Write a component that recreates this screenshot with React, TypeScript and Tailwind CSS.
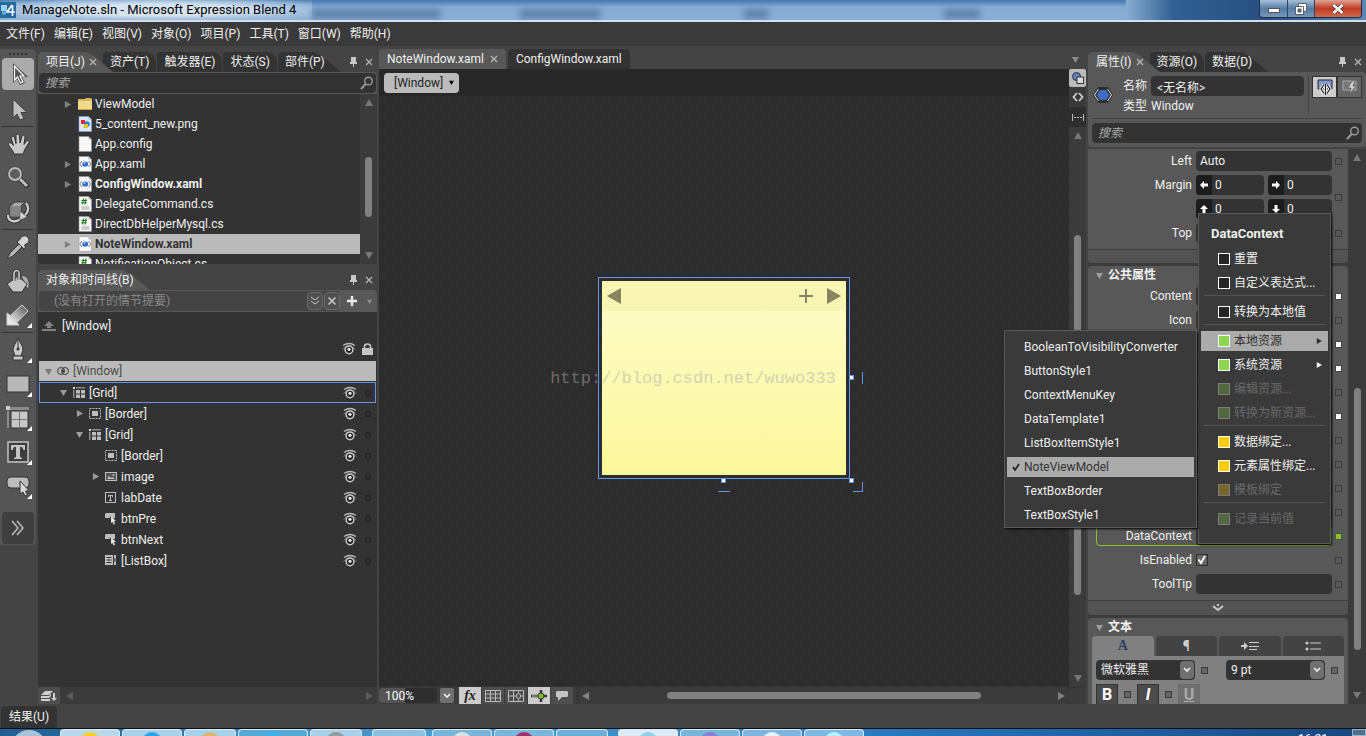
import type { ReactNode } from "react";
import clsx from "clsx";

interface FileItem {
  name: string;
  icon: "folder" | "image" | "blank" | "xaml" | "cs";
  expandable?: boolean;
  bold?: boolean;
  selected?: boolean;
}

interface TreeItem {
  name: string;
  icon: "grid" | "border" | "image" | "text" | "button" | "list";
  indent: string;
  arrow?: "open" | "closed";
  outlined?: boolean;
}

interface MenuEntry {
  label: string;
  swatch: string;
  disabled?: boolean;
  active?: boolean;
  submenu?: boolean;
}

const menus = ["文件(F)", "编辑(E)", "视图(V)", "对象(O)", "项目(P)", "工具(T)", "窗口(W)", "帮助(H)"];

const files: FileItem[] = [
  { name: "ViewModel", icon: "folder", expandable: true },
  { name: "5_content_new.png", icon: "image" },
  { name: "App.config", icon: "blank" },
  { name: "App.xaml", icon: "xaml", expandable: true },
  { name: "ConfigWindow.xaml", icon: "xaml", expandable: true, bold: true },
  { name: "DelegateCommand.cs", icon: "cs" },
  { name: "DirectDbHelperMysql.cs", icon: "cs" },
  { name: "NoteWindow.xaml", icon: "xaml", expandable: true, bold: true, selected: true },
  { name: "NotificationObject.cs", icon: "cs" },
];

const treeItems: TreeItem[] = [
  { name: "[Grid]", icon: "grid", indent: "pl-5", arrow: "open", outlined: true },
  { name: "[Border]", icon: "border", indent: "pl-9", arrow: "closed" },
  { name: "[Grid]", icon: "grid", indent: "pl-9", arrow: "open" },
  { name: "[Border]", icon: "border", indent: "pl-[52px]" },
  { name: "image", icon: "image", indent: "pl-[52px]", arrow: "closed" },
  { name: "labDate", icon: "text", indent: "pl-[52px]" },
  { name: "btnPre", icon: "button", indent: "pl-[52px]" },
  { name: "btnNext", icon: "button", indent: "pl-[52px]" },
  { name: "[ListBox]", icon: "list", indent: "pl-[52px]" },
];

const resources = [
  "BooleanToVisibilityConverter", "ButtonStyle1", "ContextMenuKey", "DataTemplate1",
  "ListBoxItemStyle1", "NoteViewModel", "TextBoxBorder", "TextBoxStyle1",
];

const menuGroups: MenuEntry[][] = [
  [
    { label: "重置", swatch: "border-white bg-[#262626]" },
    { label: "自定义表达式...", swatch: "border-white bg-[#262626]" },
  ],
  [{ label: "转换为本地值", swatch: "border-white bg-[#262626]" }],
  [
    { label: "本地资源", swatch: "border-white bg-[#8fd650]", active: true, submenu: true },
    { label: "系统资源", swatch: "border-white bg-[#8fd650]", submenu: true },
    { label: "编辑资源...", swatch: "border-[#7c7c7c] bg-[#52683f]", disabled: true },
    { label: "转换为新资源...", swatch: "border-[#7c7c7c] bg-[#52683f]", disabled: true },
  ],
  [
    { label: "数据绑定...", swatch: "border-white bg-[#ffcc00]" },
    { label: "元素属性绑定...", swatch: "border-white bg-[#ffcc00]" },
    { label: "模板绑定", swatch: "border-[#7c7c7c] bg-[#75662a]", disabled: true },
  ],
  [{ label: "记录当前值", swatch: "border-[#7c7c7c] bg-[#52683f]", disabled: true }],
];

// rows that sit under the open menus
const coveredRows = ["white", "white", "plain", "white", "plain", "plain", "plain", "plain"] as const;

/* ---------- small shared pieces ---------- */

function Arrow({ dir, className }: { dir: "up" | "down" | "left" | "right"; className?: string }) {
  const d = { up: "M0 7h8L4 0z", down: "M0 1h8L4 8z", left: "M7 0v8L0 4z", right: "M1 0v8l7-4z" }[dir];
  return (
    <svg viewBox="0 0 8 8" className={clsx("shrink-0", className ?? "size-2")} fill="currentColor">
      <path d={d} />
    </svg>
  );
}

function Close() {
  return (
    <button aria-label="Close" className="text-[#b5b5b5]">
      <svg viewBox="0 0 8 8" className="size-2" stroke="currentColor" strokeWidth="1.3">
        <path d="M1 1l6 6M7 1L1 7" />
      </svg>
    </button>
  );
}

function Pin() {
  return (
    <button aria-label="Pin" className="text-[#c8c8c8]">
      <svg viewBox="0 0 9 10" className="h-2.5 w-[9px]" fill="currentColor">
        <path d="M2 0h5v5H2zM1 5h7v2H1zM4 7h1v3H4z" />
      </svg>
    </button>
  );
}

function Search() {
  return (
    <svg viewBox="0 0 14 14" className="size-3.5 shrink-0 text-[#9a9a9a]" fill="none" stroke="currentColor">
      <circle cx="8.500" cy="5" r="3.800" strokeWidth="1.400" />
      <path d="M5.700 8L1 13" strokeWidth="2" />
    </svg>
  );
}

function Eye() {
  return (
    <svg viewBox="0 0 14 13" className="h-[13px] w-3.5 shrink-0" fill="none">
      <path d="M1 3.500Q7-.5 13 3.500" stroke="#b9b9b9" strokeWidth="1.300" />
      <path d="M.5 7.500Q3 4 7 4t6.500 3.500" stroke="#777" />
      <circle cx="7" cy="7.800" r="3.900" fill="#222" stroke="#c9c9c9" strokeWidth="1.500" />
      <circle cx="7" cy="7.300" r="1.600" fill="#e8e8e8" />
    </svg>
  );
}

function Marker({ kind = "plain" }: { kind?: "plain" | "white" | "green" }) {
  return (
    <button
      aria-label="Advanced options"
      className={clsx("size-[7px] shrink-0 border", {
        "border-[#3b3b3b]": kind === "plain",
        "border-[#444] bg-white": kind === "white",
        "border-[#4c5c30] bg-[#8dbf2d]": kind === "green",
      })}
    />
  );
}

function Tabs({ tabs }: { tabs: string[] }) {
  return (
    <div className="flex h-[26px] items-end pt-1.5">
      {tabs.map((tab, i) => (
        <div
          key={tab}
          className={clsx("flex h-5 items-center gap-1 whitespace-nowrap", {
            "relative z-10 -mr-2.5 bg-[#585858] pr-4 pl-2 [clip-path:polygon(0_3px,3px_0,calc(100%-27px)_0,calc(100%-19px)_4px,100%_100%,0_100%)]": i === 0,
            "mr-px rounded-t-[10px] rounded-tl-[3px] bg-[#333] pr-[7px] pl-[7px]": i > 0 && i < tabs.length - 1,
            "bg-[#333] pr-4 pl-[7px] [clip-path:polygon(0_3px,3px_0,calc(100%-27px)_0,calc(100%-19px)_4px,100%_100%,0_100%)]": i > 0 && i === tabs.length - 1,
          })}
        >
          <button>{tab}</button>
          {i === 0 && tabs.length > 1 && <Close />}
        </div>
      ))}
      <div className="ml-auto flex h-5 shrink-0 items-center gap-[7px] pr-1">
        <Pin />
        <Close />
      </div>
    </div>
  );
}

function VScroll({ before, thumb, className }: { before: string; thumb: string; className?: string }) {
  return (
    <div className={clsx("flex shrink-0 flex-col items-center bg-[#3b3b3b] text-[#777]", className)}>
      <Arrow dir="up" className="mt-[5px] size-2" />
      <div className={before} />
      <div className={clsx("w-[7px] rounded-full bg-[#808080]", thumb)} />
      <Arrow dir="down" className="mt-auto mb-[5px] size-2" />
    </div>
  );
}

/* ---------- icons ---------- */

function FileIcon({ kind }: { kind: FileItem["icon"] }) {
  if (kind === "folder") {
    return (
      <svg viewBox="0 0 14 14" className="size-3.5">
        <path d="M0 2h7l1-1h5l1 1v11H0z" fill="#d9b55c" />
        <path d="M0 4h14v9H0z" fill="#f3d98e" />
        <path d="M0 12h14v1H0z" fill="#c9a146" />
      </svg>
    );
  }
  return (
    <svg viewBox="0 0 14 16" className="h-4 w-3.5">
      <path d="M1 .5h9.500l3 3v12H1z" fill={kind === "image" ? "#dce9fa" : "#f7f7f7"} stroke={kind === "image" ? "#7d9fd4" : "#999"} strokeWidth=".6" />
      <path d="M10.500.5v3h3z" fill="#bbb" />
      {kind === "image" && (
        <>
          <path d="M3 4h4v4H3z" fill="#e8261c" />
          <circle cx="9" cy="8" r="2.800" fill="#2a7de0" />
          <path d="M7 8h3v4H5z" fill="#f5c518" />
        </>
      )}
      {kind === "xaml" && (
        <>
          <path d="M4 5L1.800 8 4 11M10.500 5l2.200 3-2.200 3" fill="none" stroke="#777" strokeWidth=".9" />
          <ellipse cx="7.200" cy="8" rx="3" ry="2.600" fill="#2b6fd6" />
          <circle cx="6.500" cy="7" r="1" fill="#a9d0ff" />
        </>
      )}
      {kind === "cs" && (
        <>
          <path d="M5.500 2.500l-1 6M8 2.500l-1 6M3.500 4.500H9M3.200 6.700h5.500" stroke="#1a7a1a" strokeWidth="1.100" />
          <path d="M3.500 11h8M3.500 13h8" stroke="#999" strokeWidth=".9" />
        </>
      )}
    </svg>
  );
}

function TreeIcon({ kind }: { kind: TreeItem["icon"] }) {
  return (
    <svg viewBox="0 0 12 12" className="size-3 shrink-0" fill="#bdbdbd">
      {kind === "grid" && (
        <>
          <path d="M0 0h2v2H0z" fill="#ddd" />
          <path d="M3 0h9v1.500H3zM0 3h1.500v8H0z" fill="#8a8a8a" />
          <path d="M3 3h4v3.500H3zM8 3h4v3.500H8zM3 7.500h4V11H3zM8 7.500h4V11H8z" />
        </>
      )}
      {kind === "border" && (
        <>
          <rect x="3" y="3" width="6" height="5" />
          <rect x=".5" y=".5" width="11" height="10" fill="none" stroke="#bdbdbd" strokeDasharray="2 1" />
        </>
      )}
      {kind === "image" && (
        <>
          <rect x=".5" y="1.500" width="11" height="8" fill="#555" stroke="#bdbdbd" />
          <path d="M2 8l2-3 2 2 1-1 3 2z" />
          <circle cx="8.500" cy="4" r="1" />
        </>
      )}
      {kind === "text" && (
        <>
          <rect x=".5" y=".5" width="10" height="10" fill="none" stroke="#bdbdbd" />
          <path d="M3 3h5v2H7V4H6v4h1v1H4V8h1V4H4v1H3z" />
        </>
      )}
      {kind === "button" && (
        <>
          <path d="M1 0h9v5H7L5 3v2H0V1z" />
          <path d="M6 3l5 5H9l1 3-1.500.500L7.500 9 6 10z" fill="#e0e0e0" />
        </>
      )}
      {kind === "list" && (
        <>
          <path d="M0 0h8v10H0zM9 0h2v3H9zM9 7h2v3H9zM9.500 3h1v4h-1z" />
          <path d="M1.500 2.500h5M1.500 5h5M1.500 7.500h5" stroke="#333" />
        </>
      )}
    </svg>
  );
}

const toolGroups: { name: string; more?: boolean; icon: ReactNode }[][] = [
  [
    {
      name: "Selection",
      icon: (
        <>
          <path d="M7 1v20l4-4 3 6 5-2-3-6h6z" fill="#444" />
          <path d="M8.500 4v14l3-3 3 6 2.500-1-3-6h4z" fill="#555" stroke="#fff" strokeWidth="1.200" />
        </>
      ),
    },
    { name: "Direct Selection", icon: <path d="M7 2v19l4-4 3 6 4-1.500-3-6h6z" fill="#c0c0c0" stroke="#3c3c3c" /> },
  ],
  [
    {
      name: "Pan",
      icon: <path d="M8 22c-1-4-4-6-6-10 1-2 3.500-1.500 5.500 1.500L5 6c.5-2 2.500-2 3.500-.5l1.500 6V3.500c1-2 3-1.500 3.500.5l.5 7L16 4c1.200-1.500 3-.5 3 1.500l-1 7 2.500-3.500c1.500-1 3 0 2.500 1.500L19 17l-2 5z" fill="#c8c8c8" stroke="#333" />,
    },
    {
      name: "Zoom",
      icon: (
        <>
          <path d="M14 13l8 8" stroke="#333" strokeWidth="5" />
          <path d="M14 13l7 7" stroke="#c0c0c0" strokeWidth="3" />
          <circle cx="9" cy="8" r="7" stroke="#333" />
          <circle cx="9" cy="8" r="6" fill="#5d5d5d" stroke="#bdbdbd" strokeWidth="1.800" />
        </>
      ),
    },
    {
      name: "Camera Orbit",
      icon: (
        <>
          <path d="M4 6l5-4h10l-4 4v11H4z" fill="#a8a8a8" stroke="#383838" />
          <path d="M4 6h11v10H4z" fill="#858585" />
          <path d="M20 3c4 5 2 11-4 14M2 15c0 7 8 8 12 4" stroke="#333" strokeWidth="4" />
          <path d="M20 3c4 5 2 11-4 14M2 15c0 7 8 8 12 4" stroke="#d2d2d2" strokeWidth="2.200" />
          <path d="M14 11v9l7-3z" fill="#d2d2d2" stroke="#444" strokeWidth=".5" />
        </>
      ),
    },
  ],
  [
    {
      name: "Color Eyedropper",
      icon: (
        <>
          <path d="M1 24l3-6 9-9 3 3-9 9z" fill="#b5b5b5" stroke="#333" />
          <path d="M11 7l7 7 1.500-2-1-2c4-2 6-5 3-8s-7 0-8 3l-1.500 1z" fill="#d4d4d4" stroke="#333" />
        </>
      ),
    },
    {
      name: "Paint Bucket",
      icon: (
        <>
          <path d="M15 7c6-2 9 4 8 12-3 1-4-3-5-6z" fill="#aaa" stroke="#333" strokeWidth=".8" />
          <path d="M1 15L12 7l9 8-5 8H7z" fill="#c4c4c4" stroke="#333" />
          <path d="M8 12V5c0-5 6-4 5 0v6" stroke="#333" strokeWidth="3" />
          <path d="M8 12V5c0-5 6-4 5 0v6" stroke="#d6d6d6" strokeWidth="1.500" />
        </>
      ),
    },
    {
      name: "Gradient",
      more: true,
      icon: (
        <>
          <defs>
            <linearGradient id="brush" x1="0" y1="1" x2="1" y2="0">
              <stop offset="0.200" stopColor="#e8e8e8" />
              <stop offset="1" stopColor="#4d4d4d" />
            </linearGradient>
          </defs>
          <path d="M1 22V10l3.500 2.500L16 2l6 6-11 11.500 2 2.500z" fill="url(#brush)" stroke="#d0d0d0" />
        </>
      ),
    },
  ],
  [
    {
      name: "Pen",
      more: true,
      icon: (
        <>
          <path d="M12 0c2 5 5 8 5 12l-2 6H9l-2-6c0-4 3-7 5-12z" fill="#c8c8c8" stroke="#333" />
          <path d="M12 2v9" stroke="#333" />
          <circle cx="12" cy="11" r="1.500" fill="#333" />
          <path d="M7 18h10v4H7z" fill="#c8c8c8" stroke="#333" />
        </>
      ),
    },
    { name: "Rectangle", more: true, icon: <rect x="1" y="4" width="22" height="16" fill="#b8b8b8" stroke="#333" /> },
    {
      name: "Grid",
      more: true,
      icon: (
        <>
          <path d="M4 1h19v3H4zM1 5h2v17H1z" fill="#8b8b8b" />
          <rect x="0" y="0" width="4" height="4" fill="#ccc" />
          <path d="M5 5h17v17H5z" fill="#c8c8c8" stroke="#333" />
          <path d="M13.500 6v15M6 13.500h15" stroke="#777" />
        </>
      ),
    },
    {
      name: "TextBlock",
      more: true,
      icon: (
        <>
          <rect x="2" y="2" width="20" height="20" fill="#3d3d3d" stroke="#c4c4c4" strokeWidth="1.500" />
          <path d="M5 5h14v5h-1.500L16 7h-2v10l2 1v1H8v-1l2-1V7H8l-1.500 3H5z" fill="#c4c4c4" />
        </>
      ),
    },
    {
      name: "Button",
      more: true,
      icon: (
        <>
          <rect x="1" y="3" width="22" height="11" rx="4" fill="#bdbdbd" stroke="#333" />
          <path d="M14 7v13l3-2 2 4 2.500-1-2-4h4z" fill="#d8d8d8" stroke="#333" />
        </>
      ),
    },
  ],
];

/* ---------- title bar, menu ---------- */

function TitleBar() {
  return (
    <header className="flex h-[22px] shrink-0 items-center overflow-hidden border-b-2 border-[#cfdff0] bg-[linear-gradient(180deg,#4377ae,#85abd3_35%,#8aaed3)]">
      <div className="flex h-5 items-center gap-1.5 bg-[radial-gradient(ellipse_at_center,#d6e4f1_40%,#a5c2de_65%,transparent)] pr-4 text-black">
        <svg viewBox="0 0 16 16" className="size-4">
          <rect width="16" height="16" fill="#246b9c" />
          <path d="M1 3h6v6H1z" fill="#9bd1ef" />
          <path d="M12 3L7 10h8M12.500 3v11" fill="none" stroke="#fff" strokeWidth="1.600" />
          <circle cx="4" cy="11" r="2" fill="#62b3df" />
        </svg>
        <h1 className="text-[13px] whitespace-nowrap">ManageNote.sln - Microsoft Expression Blend 4</h1>
      </div>
      {/* windows showing through the glass */}
      <div className="flex flex-1 items-center overflow-hidden pt-2 opacity-60 blur-[3px]">
        <div className="h-2.5 w-32 bg-[#46678c]" />
        <div className="ml-20 h-2.5 w-20 bg-[#46678c]" />
        <div className="ml-36 h-2.5 w-6 bg-[#46678c]" />
        <div className="ml-44 h-2.5 w-9 bg-[#46678c]" />
      </div>
      <div className="flex h-5 w-60 items-start justify-end bg-[linear-gradient(90deg,#8aaed3,#315f92_20%,#274f7f_60%,#5e86b0)] pr-1">
        <div className="flex h-[18px] overflow-hidden rounded-b border border-t-0 border-[#1d2f45]">
          <button aria-label="Minimize" className="flex w-7 items-center justify-center border-r border-[#2c4664] bg-[linear-gradient(#a9bfd6,#567ca5_50%,#7497bb)]">
            <svg viewBox="0 0 12 5" className="mt-1 h-[5px] w-3"><rect x=".5" y=".5" width="11" height="4" fill="#fff" stroke="#555" /></svg>
          </button>
          <button aria-label="Restore" className="flex w-[27px] items-center justify-center border-r border-[#2c4664] bg-[linear-gradient(#a9bfd6,#567ca5_50%,#7497bb)]">
            <svg viewBox="0 0 12 12" className="size-3" fill="#fff" stroke="#444" strokeWidth=".8">
              <path d="M3.500.500h8v8h-8z" />
              <path d="M.5 3.500h8v8h-8z" />
              <path d="M3 6h3v3H3z" fill="#567ca5" />
            </svg>
          </button>
          <button aria-label="Close window" className="flex w-[46px] items-center justify-center bg-[linear-gradient(#e0a397,#bf3a22_50%,#d06a4c)]">
            <svg viewBox="0 0 12 10" className="h-2.5 w-3">
              <path d="M1.500 1l9 8M10.500 1l-9 8" stroke="#444" strokeWidth="4" />
              <path d="M1.500 1l9 8M10.500 1l-9 8" stroke="#fff" strokeWidth="2.500" />
            </svg>
          </button>
        </div>
      </div>
    </header>
  );
}

function Toolbox() {
  return (
    <aside className="w-[38px] shrink-0 pt-[3px]">
      <div className="w-9 rounded-r bg-[#555] px-0.5 pb-px">
        <div className="flex h-[9px] items-center justify-center">
          <div className="w-[18px] border-t-2 border-dotted border-[#333]" />
        </div>
        {toolGroups.map((group, g) => (
          <div key={g} className={clsx(g > 0 && "border-t border-[#333]")}>
            {group.map((tool, t) => (
              <button
                key={tool.name}
                aria-label={tool.name}
                className={clsx(
                  "relative flex w-8 items-center justify-center rounded-sm",
                  g === 0 && t === 0 ? "mb-0.5 h-8 bg-[#ababab]" : "h-[34px]"
                )}
              >
                <svg viewBox="0 0 24 24" className="size-6" fill="none">{tool.icon}</svg>
                {tool.more && (
                  <svg viewBox="0 0 5 5" className="absolute right-0.5 bottom-1 size-[5px]"><path d="M5 0v5H0z" fill="#fff" /></svg>
                )}
              </button>
            ))}
          </div>
        ))}
        <button aria-label="More tools" className="mt-[9px] flex h-8 w-8 items-center justify-center rounded-sm bg-[#3f3f3f]">
          <svg viewBox="0 0 16 16" className="size-4" fill="none" stroke="#bdbdbd" strokeWidth="1.500">
            <path d="M2 1l6 7-6 7M7 1l6 7-6 7" />
          </svg>
        </button>
      </div>
    </aside>
  );
}

/* ---------- left panels ---------- */

function ProjectPanel() {
  return (
    <section>
      <Tabs tabs={["项目(J)", "资产(T)", "触发器(E)", "状态(S)", "部件(P)"]} />
      <div className="rounded-tr bg-[#585858] p-px">
        <label className="flex h-5 items-center rounded-sm bg-[#333] pr-0.5 pl-1.5">
          <input aria-label="搜索" placeholder="搜索" className="min-w-0 flex-1 bg-transparent italic placeholder:text-[#a8a8a8]" />
          <Search />
        </label>
      </div>
      <div className="flex h-[170px] overflow-hidden rounded-b bg-[#333]">
        <ul className="min-w-0 flex-1">
          {files.map((file) => (
            <li
              key={file.name}
              className={clsx("flex h-5 items-center pl-[26px]", {
                "bg-[#bbb] text-[#333]": file.selected,
                "font-bold": file.bold,
              })}
            >
              <span className="w-3.5 text-[#808080]">
                {file.expandable && <Arrow dir="right" className="size-[7px]" />}
              </span>
              <FileIcon kind={file.icon} />
              <span className="ml-[3px] whitespace-nowrap">{file.name}</span>
            </li>
          ))}
        </ul>
        <VScroll before="h-[50px]" thumb="h-[60px]" className="w-[17px]" />
      </div>
    </section>
  );
}

function ObjectsPanel() {
  return (
    <section className="flex min-h-0 flex-1 flex-col">
      <Tabs tabs={["对象和时间线(B)"]} />
      <div className="flex h-[22px] items-center rounded-tr bg-[#585858] p-px">
        <div className="flex h-5 flex-1 items-center gap-px rounded bg-[#444] pl-[15px] text-[#8a8a8a]">
          <span className="flex-1">(没有打开的情节提要)</span>
          <button aria-label="Open storyboard" className="flex h-[18px] w-4 items-center justify-center rounded-sm border border-[#6b6b6b] bg-[#505050]">
            <svg viewBox="0 0 10 10" className="size-2.5" fill="none" stroke="#ccc"><path d="M1 1l4 3 4-3M1 5l4 3 4-3" /></svg>
          </button>
          <button aria-label="Close storyboard" className="flex h-[18px] w-4 items-center justify-center rounded-sm border border-[#6b6b6b] bg-[#505050]">
            <svg viewBox="0 0 10 10" className="size-2.5" stroke="#ccc" strokeWidth="1.500"><path d="M1.500 1.500l7 7M8.500 1.500l-7 7" /></svg>
          </button>
        </div>
        <button aria-label="New storyboard" className="flex w-9 items-center justify-end gap-2.5 pr-1 text-[#8f8f8f]">
          <svg viewBox="0 0 10 10" className="size-2.5" stroke="#e6e6e6" strokeWidth="2.500"><path d="M5 0v10M0 5h10" /></svg>
          <Arrow dir="down" className="size-[5px]" />
        </button>
      </div>
      <div className="min-h-0 flex-1 overflow-hidden bg-[#333]">
        <div className="flex h-7 items-center gap-1.5 pl-1">
          <svg viewBox="0 0 14 10" className="h-2.5 w-3.5" fill="#848484"><path d="M7 0l5 5H9v2H5V5H2zM0 8h14v2H0z" /></svg>
          <span>[Window]</span>
        </div>
        <div className="flex h-[21px] items-center justify-end gap-1.5 pr-1 pb-1">
          <Eye />
          <svg viewBox="0 0 11 12" className="h-3 w-[11px]" fill="#c4c4c4"><path d="M0 5h11v7H0z" /><path d="M2.500 6V3.500q0-2.500 3-2.500t3 2.500V6" fill="none" stroke="#c4c4c4" strokeWidth="1.600" /></svg>
        </div>
        <div className="mx-px mb-px flex h-5 items-center bg-[#bbb] pl-1.5 text-[#4b4b4b]">
          <Arrow dir="down" className="mr-[5px] size-[7px] text-[#777]" />
          <svg viewBox="0 0 12 8" className="mr-1 h-2 w-3" fill="none" stroke="#3f3f3f"><rect x=".5" y=".5" width="7" height="7" rx="3.500" /><rect x="4.500" y=".5" width="7" height="7" rx="3.500" /><circle cx="6" cy="4" r="1" fill="#3f3f3f" /></svg>
          <span>[Window]</span>
        </div>
        <ul>
          {treeItems.map((item, i) => (
            <li key={i} className={clsx("mx-px flex h-[21px] items-center border pr-1", item.indent, item.outlined ? "border-[#6495ed]" : "border-transparent")}>
              <span className="w-[13px] text-[#9c9c9c]">
                {item.arrow && <Arrow dir={item.arrow === "open" ? "down" : "right"} className="size-[7px]" />}
              </span>
              <TreeIcon kind={item.icon} />
              <span className="ml-1 flex-1">{item.name}</span>
              <Eye />
              <span className="ml-2 size-1.5 rounded-sm border border-[#1c1c1c]" />
            </li>
          ))}
        </ul>
      </div>
      <div className="flex h-[17px] shrink-0 items-center bg-[#3b3b3b] pr-1 text-[#5e5e5e]">
        <button aria-label="Arrange by Z order" className="mr-1.5 flex h-full w-[22px] items-center justify-center bg-[#4e4e4e]">
          <svg viewBox="0 0 16 12" className="h-3 w-4" fill="#d0d0d0"><path d="M4 1h8L8 5H0zM0 6h8l2-2v2L8 8H0zM0 9h9v2H0zM12 3h2v5h2l-3 3-3-3h2z" /></svg>
        </button>
        <Arrow dir="left" />
        <Arrow dir="right" className="ml-auto size-2" />
      </div>
    </section>
  );
}

/* ---------- artboard ---------- */

const stripButton = "flex h-[17px] w-[22px] items-center justify-center";

function Artboard() {
  return (
    <main className="flex min-w-0 flex-1 flex-col pl-0.5">
      <div className="flex h-[23px] items-end gap-0.5 pt-[3px]">
        <div className="flex h-5 items-center gap-1.5 rounded-t bg-[#585858] px-2">
          <button>NoteWindow.xaml</button>
          <Close />
        </div>
        <button className="h-5 rounded-t bg-[#333] px-2">ConfigWindow.xaml</button>
        <div className="ml-auto flex h-5 w-[22px] items-center text-[#8a8a8a]">
          <Arrow dir="down" className="mx-1.5 size-[7px]" />
        </div>
      </div>
      <div className="flex min-h-0 flex-1">
        <div className="flex min-w-0 flex-1 flex-col">
          <div className="flex h-[27px] items-center bg-[#282828] pl-[5px]">
            <button className="flex h-5 items-center gap-1.5 rounded-sm bg-[#bbb] pr-[5px] pl-2.5 text-[#222]">
              [Window]
              <Arrow dir="down" className="size-[5px] text-black" />
            </button>
          </div>
          <div className="relative flex min-h-0 flex-1 items-center justify-center bg-[repeating-conic-gradient(#2c2c2c_0_25%,#2e2e2e_0_50%)] bg-[length:16px_16px] pb-[26px]">
            <div className="relative h-[202px] w-[252px] border border-[#6495ed] p-[3px]">
              <div className="flex h-full flex-col bg-[linear-gradient(#fefccb,#fbf79b)]">
                <div className="flex h-[30px] items-center bg-[#f8f5b2] px-[5px] text-[#87845f]">
                  <button aria-label="Previous note"><Arrow dir="left" className="size-4" /></button>
                  <button aria-label="Add note" className="mr-3 ml-auto">
                    <svg viewBox="0 0 14 14" className="size-3.5" stroke="currentColor" strokeWidth="2"><path d="M7 0v14M0 7h14" /></svg>
                  </button>
                  <button aria-label="Next note"><Arrow dir="right" className="size-4" /></button>
                </div>
              </div>
              {/* resize handles */}
              <div className="absolute top-[97px] -right-[5px] size-[5px] border border-[#6495ed] bg-white" />
              <div className="absolute top-[94px] -right-3.5 h-3 w-px bg-[#6495ed]" />
              <div className="absolute -bottom-[5px] left-[122px] size-[5px] border border-[#6495ed] bg-white" />
              <div className="absolute -bottom-3.5 left-[119px] h-px w-3 bg-[#6495ed]" />
              <div className="absolute -right-[5px] -bottom-[5px] size-[5px] border border-[#6495ed] bg-white" />
              <div className="absolute -right-3.5 -bottom-3.5 size-2.5 border-r border-b border-[#6495ed]" />
            </div>
            <div className="absolute inset-0 flex items-center justify-center pr-[62px] pb-6 font-['Liberation_Mono',monospace] text-[17px] text-[#aaa]/50">
              http://blog.csdn.net/wuwo333
            </div>
          </div>
          <div className="flex h-[18px] shrink-0 items-center border-t border-[#333] bg-[#3b3b3b] text-[#808080]">
            <input aria-label="Zoom" defaultValue="100%" className="h-[15px] w-[58px] rounded bg-[linear-gradient(90deg,#555_26px,#2e2e2e_26px)] pl-1.5 text-white" />
            <button aria-label="Zoom levels" className="ml-[3px] flex h-[15px] w-3.5 items-center justify-center rounded-xs bg-[#707070]">
              <svg viewBox="0 0 8 6" className="h-1.5 w-2" fill="none" stroke="#eee" strokeWidth="1.600"><path d="M1 1l3 3 3-3" /></svg>
            </button>
            <div className="ml-[5px] flex gap-px">
              <button aria-label="Effects" className={clsx(stripButton, "bg-[#ccc] text-[#222]")}>
                <span className="font-['Liberation_Serif',serif] text-sm font-bold italic">fx</span>
              </button>
              <button aria-label="Show grid" className={clsx(stripButton, "bg-[#4e4e4e]")}>
                <svg viewBox="0 0 16 12" className="h-3 w-4" fill="none" stroke="#b9b9b9"><path d="M.5.500h15v11H.500zM5.500.500v11M10.500.500v11M.5 4h15M.5 8h15" /></svg>
              </button>
              <button aria-label="Snap to grid" className={clsx(stripButton, "bg-[#4e4e4e]")}>
                <svg viewBox="0 0 16 12" className="h-3 w-4" fill="none" stroke="#b9b9b9"><path d="M.5.500h15v11H.500zM5.500 1v10M1 6h7M13 6h3M10.500 1v2M10.500 9v2" /><circle cx="10.500" cy="6" r="2.200" /></svg>
              </button>
              <button aria-label="Snap to snaplines" className={clsx(stripButton, "bg-[#ccc]")}>
                <svg viewBox="0 0 16 14" className="h-3.5 w-4"><path d="M0 7h7M10 1v3M10 10v3M13 7h3" stroke="#333" strokeWidth="2.500" /><path d="M1 7h6" stroke="#bbb" /><circle cx="10" cy="7" r="3" fill="#7cc12c" stroke="#333" /></svg>
              </button>
              <button aria-label="Annotations" className={clsx(stripButton, "bg-[#4e4e4e]")}>
                <svg viewBox="0 0 12 10" className="h-2.5 w-3" fill="#c4c4c4"><path d="M1 0h10l1 1v4l-1 1H6l-4 4V6H0V1z" /></svg>
              </button>
            </div>
            <div className="ml-1 flex h-full flex-1 items-center border-l border-[#333] px-1">
              <Arrow dir="left" />
              <div className="ml-[16%] h-[7px] w-[65%] rounded-full bg-[#808080]" />
              <Arrow dir="right" className="ml-auto size-2" />
            </div>
          </div>
        </div>
        <div className="mr-0.5 flex w-[17px] shrink-0 flex-col bg-[#3b3b3b]">
          <button aria-label="Design" className="flex h-[18px] items-center justify-center rounded-xs bg-[#bbb]">
            <svg viewBox="0 0 12 12" className="size-3"><circle cx="4.500" cy="4.500" r="4" fill="#5e7fc0" stroke="#333" /><rect x="5" y="5" width="6.500" height="6.500" fill="#ddd" stroke="#333" /></svg>
          </button>
          <button aria-label="XAML" className="flex h-5 items-center justify-center bg-[#3a3a3a]">
            <svg viewBox="0 0 12 10" className="h-2.5 w-3" fill="none" stroke="#ccc" strokeWidth="1.800"><path d="M5 1L1.500 5 5 9M7 1l3.500 4L7 9" /></svg>
          </button>
          <button aria-label="Split" className="flex h-5 items-center justify-center bg-[#2e2e2e]">
            <svg viewBox="0 0 12 7" className="h-[7px] w-3" fill="none" stroke="#bbb"><path d="M.5 0v7M11.500 0v7" /><path d="M2 3.500h8" strokeDasharray="2 1" /></svg>
          </button>
          <VScroll before="h-[95px]" thumb="h-[360px]" className="min-h-0 flex-1" />
          <div className="h-[17px] border-t border-[#333]" />
        </div>
      </div>
    </main>
  );
}

/* ---------- properties ---------- */

function Row({ label, marker, children }: { label?: string; marker?: "plain" | "white" | "green"; children?: ReactNode }) {
  return (
    <div className="flex h-6 items-center">
      <span className="flex-1 pr-1 text-right">{label}</span>
      <div className="mr-[3px] flex w-[136px] gap-1">
        {children ?? <input aria-label={label ?? "Value"} className="h-5 w-full rounded bg-[#333] px-1" />}
      </div>
      <Marker kind={marker} />
      <span className="w-1.5" />
    </div>
  );
}

function MarginBox({ side, rotate }: { side: string; rotate: string }) {
  return (
    <label className="flex h-5 min-w-0 flex-1 items-center overflow-hidden rounded bg-[#333]">
      <span className="flex h-full w-4 shrink-0 items-center justify-center bg-[#1c1c1c]">
        <svg viewBox="0 0 8 8" className={clsx("size-2", rotate)} fill="#fff"><path d="M0 4l4-4v2.500h4v3H4V8z" /></svg>
      </span>
      <input aria-label={side} defaultValue="0" className="min-w-0 flex-1 bg-transparent pl-[3px]" />
    </label>
  );
}

function DropDown({ label, value }: { label: string; value: string }) {
  return (
    <div className="flex h-5 w-[99px] items-center rounded bg-[#333] pr-px">
      <select aria-label={label} className="h-5 min-w-0 flex-1 appearance-none bg-transparent pl-[5px]">
        <option>{value}</option>
      </select>
      <span className="flex h-[18px] w-3.5 items-center justify-center rounded-sm bg-[#707070]">
        <svg viewBox="0 0 8 6" className="h-1.5 w-2" fill="none" stroke="#eee" strokeWidth="1.600"><path d="M1 1l3 3 3-3" /></svg>
      </span>
    </div>
  );
}

function PropertiesPanel() {
  return (
    <aside className="flex w-[278px] shrink-0 flex-col">
      <Tabs tabs={["属性(I)", "资源(O)", "数据(D)"]} />
      <div className="rounded-b rounded-tr bg-[#585858] px-1 py-1">
        <div className="flex border-b border-[#444]">
          <svg viewBox="0 0 20 16" className="mt-[11px] mr-2.5 ml-px h-4 w-5 shrink-0">
            <path d="M5 0h10l5 8-5 8H5L0 8z" fill="#2d2d2d" />
            <path d="M5.500 2L1.500 8l4 6M14.500 2l4 6-4 6" fill="none" stroke="#ddd" />
            <path d="M7 3h6l3.500 5-3.500 5H7L3.500 8z" fill="#3f6bc0" />
          </svg>
          <div className="min-w-0 flex-1 pb-0.5">
            <label className="flex h-5 items-center gap-1">
              <span className="w-6 shrink-0">名称</span>
              <input defaultValue="<无名称>" className="h-5 min-w-0 flex-1 rounded bg-[#333] px-1.5" />
            </label>
            <p className="flex h-5 items-center gap-1"><span className="w-6 shrink-0">类型</span>Window</p>
          </div>
          <div className="mb-1 ml-1 flex border-l border-[#444] pl-[3px]">
            <button aria-label="Properties view" className="flex h-[22px] w-[25px] items-center justify-center border border-[#333] bg-[#ccc]">
              <svg viewBox="0 0 16 16" className="size-4"><path d="M1 1h14v9H1z" fill="#7f9ad0" stroke="#222" /><path d="M7 5.500L4 10l3 4.500M10 5.500l3 4.500-3 4.500M8.500 5v11" fill="none" stroke="#fff" strokeWidth="3" /><path d="M7 5.500L4 10l3 4.500M10 5.500l3 4.500-3 4.500M8.500 5v11" fill="none" stroke="#222" strokeWidth="1.300" /></svg>
            </button>
            <button aria-label="Events view" className="flex h-[22px] w-[25px] items-center justify-center border border-[#333] bg-[#666]">
              <svg viewBox="0 0 16 16" className="size-4"><path d="M1 2h13v9H1z" fill="#777" stroke="#aaa" /><path d="M10 2L6 9h3l-2 6 7-8h-3l2-5z" fill="#ccc" stroke="#444" strokeWidth=".5" /></svg>
            </button>
          </div>
        </div>
        <label className="mt-1 flex h-5 items-center rounded-sm bg-[#333] pr-0.5 pl-1.5">
          <input aria-label="搜索属性" placeholder="搜索" className="min-w-0 flex-1 bg-transparent italic placeholder:text-[#a8a8a8]" />
          <Search />
        </label>
      </div>
      <div className="mt-0.5 flex min-h-0 flex-1 overflow-hidden bg-[#3b3b3b]">
        <div className="w-[260px] shrink-0 overflow-hidden">
          <div className="rounded-b bg-[#585858]">
            <Row label="Left"><input aria-label="Left" defaultValue="Auto" className="h-5 w-full rounded bg-[#333] px-1" /></Row>
            <div className="flex h-12 items-center">
              <span className="mb-6 flex-1 pr-1 text-right">Margin</span>
              <div className="mr-[3px] grid w-[136px] grid-cols-[68px_64px] gap-1">
                <MarginBox side="Margin left" rotate="rotate-0" />
                <MarginBox side="Margin right" rotate="rotate-180" />
                <MarginBox side="Margin top" rotate="rotate-90" />
                <MarginBox side="Margin bottom" rotate="-rotate-90" />
              </div>
              <Marker />
              <span className="w-1.5" />
            </div>
            <Row label="Top" />
            <div className="mt-1 h-3.5 rounded-b border-t border-[#3e3e3e] bg-[#535353]" />
          </div>
          <div className="mt-[3px] rounded bg-[#585858]">
            <h2 className="flex h-[18px] items-center gap-[5px] pl-2 font-bold">
              <Arrow dir="down" className="size-[7px] text-[#9c9c9c]" />
              公共属性
            </h2>
            <Row label="Content" marker="white" />
            <Row label="Icon" />
            {coveredRows.map((kind, i) => <Row key={i} marker={kind} />)}
            <div className="relative">
              <Row label="DataContext" marker="green" />
              <div className="pointer-events-none absolute inset-y-0.5 right-4 left-2 rounded border border-[#8dbf2d]" />
            </div>
            <Row label="IsEnabled">
              <span className="relative flex size-3">
                <input type="checkbox" defaultChecked aria-label="IsEnabled" className="size-3 appearance-none border border-[#2b2b2b] bg-[#666]" />
                <svg viewBox="0 0 12 12" className="pointer-events-none absolute inset-0 size-3" fill="none" stroke="#fff" strokeWidth="1.800"><path d="M2.500 5.500L5 9l4-7" /></svg>
              </span>
            </Row>
            <Row label="ToolTip" />
            <div className="mt-1 flex h-[15px] items-center justify-center rounded-b border-t border-[#3e3e3e] bg-[#535353]">
              <svg viewBox="0 0 12 8" className="h-2 w-3" fill="none" stroke="#c9c9c9" strokeWidth="2"><path d="M1 2l5 4 5-4M5 1h2" /></svg>
            </div>
          </div>
          <div className="mt-[3px] rounded-t bg-[#585858] px-1">
            <h2 className="flex h-[18px] items-center gap-[5px] pl-1 font-bold">
              <Arrow dir="down" className="size-[7px] text-[#9c9c9c]" />
              文本
            </h2>
            <div className="grid grid-cols-4 gap-0.5">
              <button aria-label="Font" className="flex h-5 items-center justify-center rounded-t bg-[#808080] font-['Liberation_Serif',serif] text-sm font-bold text-[#2b3f66]">A</button>
              <button aria-label="Paragraph" className="flex h-5 items-center justify-center rounded-t bg-[#434343] text-sm font-bold text-[#ccc]">¶</button>
              <button aria-label="Line indent" className="flex h-5 items-center justify-center rounded-t bg-[#434343]">
                <svg viewBox="0 0 18 10" className="h-2.5 w-[18px]" fill="#ccc"><path d="M0 4h3V1l4 4-4 4V6H0zM8 1h10v1H8zM8 5h10v1H8zM8 8h8v1H8z" /></svg>
              </button>
              <button aria-label="List" className="flex h-5 items-center justify-center rounded-t bg-[#434343]">
                <svg viewBox="0 0 16 10" className="h-2.5 w-4" fill="#ccc"><circle cx="2" cy="2" r="1.500" /><circle cx="2" cy="8" r="1.500" /><path d="M5 1.500h11v1H5zM5 7.500h11v1H5z" /></svg>
              </button>
            </div>
            <div className="flex flex-col gap-1 bg-[#808080] p-1 pb-0">
              <div className="flex items-center">
                <DropDown label="Font family" value="微软雅黑" />
                <span className="mx-1.5 size-[7px] border border-[#3b3b3b] bg-[#666]" />
                <span className="w-3" />
                <DropDown label="Font size" value="9 pt" />
                <span className="ml-1.5 size-[7px] border border-[#3b3b3b] bg-[#666]" />
              </div>
              <div className="flex items-center gap-1.5 text-base font-bold text-white">
                <button className="h-5 w-[22px] border border-b-0 border-[#333] bg-[#4b4b4b] leading-[18px]">B</button>
                <span className="size-[7px] border border-[#3b3b3b] bg-[#666]" />
                <button className="h-5 w-[22px] border border-b-0 border-[#333] bg-[#4b4b4b] leading-[18px] italic">I</button>
                <span className="size-[7px] border border-[#3b3b3b] bg-[#666]" />
                <button className="h-5 w-[22px] border border-b-0 border-[#6b6b6b] bg-[#707070] leading-[18px] text-[#aaa] underline">U</button>
              </div>
            </div>
          </div>
        </div>
        <VScroll before="h-[226px]" thumb="h-[262px]" className="flex-1" />
      </div>
    </aside>
  );
}

/* ---------- popup menus ---------- */

function DataContextMenu() {
  return (
    <div className="absolute top-[213px] right-[35px] w-[133px] border border-[#5a5a5a] bg-[#3a3a3a] px-0.5 pt-2.5 pb-3.5 shadow-[1px_1px_2px_#000]">
      <h3 className="mb-[5px] h-5 pl-2.5 text-[13px] leading-5 font-bold">DataContext</h3>
      {menuGroups.map((group, g) => (
        <div key={g}>
          {g > 0 && <hr className="mx-[3px] mt-0.5 mb-1.5 border-[#555]" />}
          <div className="flex flex-col gap-1">
            {group.map((entry) => (
              <button
                key={entry.label}
                disabled={entry.disabled}
                className={clsx("flex h-5 w-full items-center gap-1 pl-[17px] whitespace-nowrap", {
                  "bg-[#ababab] text-[#333]": entry.active,
                  "text-[#696969]": entry.disabled,
                })}
              >
                <span className={clsx("size-3 shrink-0 border", entry.swatch)} />
                {entry.label}
                {entry.submenu && <Arrow dir="right" className="mr-1.5 ml-auto size-[6px]" />}
              </button>
            ))}
          </div>
        </div>
      ))}
    </div>
  );
}

function ResourceMenu() {
  return (
    <div className="absolute top-[330px] right-[169px] flex w-[193px] flex-col gap-1 border border-[#5a5a5a] bg-[#3a3a3a] px-0.5 pt-1.5 pb-0.5 shadow-[1px_1px_2px_#000]">
      {resources.map((name) => (
        <button
          key={name}
          className={clsx("flex h-5 w-full items-center", name === "NoteViewModel" && "bg-[#ababab] text-[#333]")}
        >
          <span className="flex w-[17px] justify-center">
            {name === "NoteViewModel" && (
              <svg viewBox="0 0 8 8" className="size-2" fill="none" stroke="#222" strokeWidth="1.800"><path d="M1 4l2 3 4-6" /></svg>
            )}
          </span>
          {name}
        </button>
      ))}
    </div>
  );
}

/* ---------- taskbar ---------- */

const tasks = [
  { box: "w-[60px] bg-[#b9d8ec]", dot: "bg-[#f2cf2b]" },
  { box: "w-[60px] bg-[#a7d0ea]", dot: "bg-[#2aa5e8]" },
  { box: "w-[52px] bg-[#a7d0ea]", dot: "bg-[#d9b571]" },
  { box: "w-[70px] bg-[#58a9d6]", dot: "bg-[#3ab4ea]" },
  { box: "w-[52px] bg-[#a7cfe6]", dot: "bg-[#8f9b9c]" },
  { box: "ml-2 w-[54px] bg-[#8cc1e1]", dot: "bg-[#8cc1e1]" },
  { box: "ml-1 w-[60px] bg-[#79b6dc]", dot: "bg-[#d8e4e2]" },
  { box: "w-[60px] bg-[#79b6dc]", dot: "bg-[#a2306f]" },
  { box: "w-[52px] bg-[#6daedb]", dot: "bg-[#6daedb]" },
  { box: "ml-2 w-[60px] bg-[#dcebf6]", dot: "bg-[#8fd0e8]" },
  { box: "w-[60px] bg-[#79b6dc]", dot: "bg-[#8a80cf]" },
  { box: "w-[60px] bg-[#7fb5df]", dot: "bg-[#e8f0fa]" },
  { box: "w-[60px] bg-[#7db9e2]", dot: "bg-[#b8f1ff]" },
];

function Taskbar() {
  return (
    <footer className="flex h-2 shrink-0 gap-0.5 overflow-hidden border-t border-[#111] bg-[linear-gradient(90deg,#205e92,#4c9bd0_30%,#2a78bf_65%,#164780)]">
      <button aria-label="Start" className="flex w-[58px] justify-center overflow-hidden">
        <span className="mt-px size-9 shrink-0 rounded-full bg-[#a9c2d6]" />
      </button>
      {tasks.map((task, i) => (
        <div key={i} className={clsx("flex justify-center overflow-hidden rounded-t-sm border border-b-0 border-[#d7edf9]", task.box)}>
          <span className={clsx("mt-0.5 size-5 shrink-0 rounded-full", task.dot)} />
        </div>
      ))}
      <time className="mt-1 ml-auto text-xs leading-3 text-white">16:21</time>
      <button aria-label="Show desktop" className="ml-[22px] w-3.5 border border-[#9ab6cf] bg-[#4e7190]" />
    </footer>
  );
}

export default function App() {
  return (
    <div className="relative flex h-screen flex-col overflow-hidden bg-[#444] font-['Roboto','Noto_Sans_CJK_SC',sans-serif] text-xs text-[#f0f0f0]">
      <TitleBar />
      <nav className="flex h-6 shrink-0 items-center gap-[9px] bg-[#3a3a3a] pl-1.5">
        {menus.map((m) => <button key={m}>{m}</button>)}
      </nav>
      <div className="flex min-h-0 flex-1">
        <Toolbox />
        <div className="flex w-[339px] shrink-0 flex-col">
          <ProjectPanel />
          <ObjectsPanel />
        </div>
        <Artboard />
        <PropertiesPanel />
      </div>
      <div className="flex h-6 shrink-0 items-end pl-px">
        <button className="h-[22px] rounded-t bg-[#333] px-2">结果(U)</button>
      </div>
      <Taskbar />
      <DataContextMenu />
      <ResourceMenu />
    </div>
  );
}
